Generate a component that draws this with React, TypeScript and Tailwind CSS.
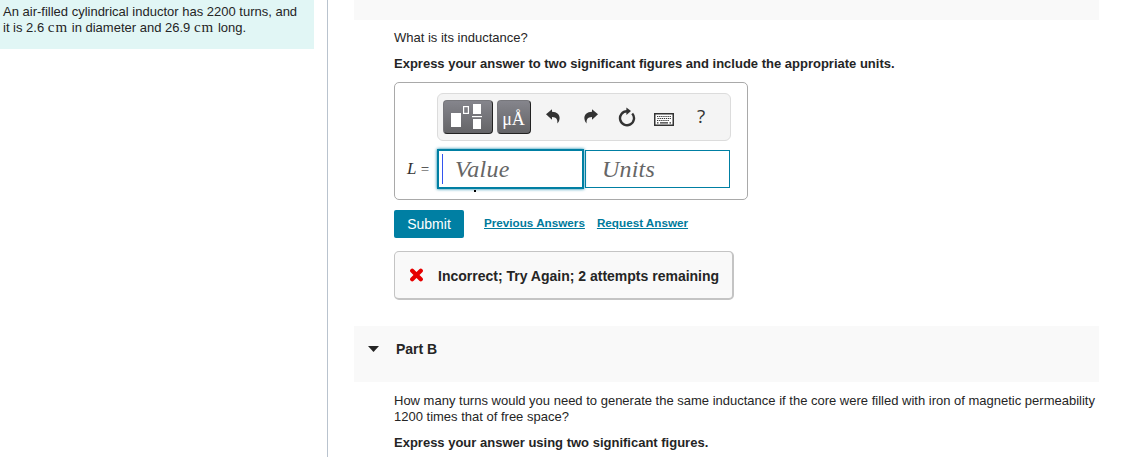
import React from "react";

const UndoIcon = () => (
  <svg width="14" height="15" viewBox="0 0 14 15" fill="#333">
    <path d="M0 5.3 L6 0.3 V2.8 C11 2.8 14 6 13.6 9.5 C13.4 11.8 12.5 13.3 11.3 14.6 C11.8 10.5 10.5 8.2 6 8 V10.8 Z" />
  </svg>
);

const RedoIcon = () => (
  <svg width="14" height="15" viewBox="0 0 14 15" fill="#333">
    <path d="M14 5.3 L8 0.3 V2.8 C3 2.8 0 6 0.4 9.5 C0.6 11.8 1.5 13.3 2.7 14.6 C2.2 10.5 3.5 8.2 8 8 V10.8 Z" />
  </svg>
);

const ResetIcon = () => (
  <svg width="18" height="20" viewBox="0 0 18 20">
    <path
      d="M14.2 6.5 A7 7 0 1 1 9 4.2"
      fill="none"
      stroke="#333"
      strokeWidth="2.4"
    />
    <path d="M8.4 0.5 L13 4.1 L8.4 8 Z" fill="#333" />
  </svg>
);

const KeyboardIcon = () => (
  <svg width="20" height="13" viewBox="0 0 20 13">
    <rect x="0.75" y="0.75" width="18.5" height="11.5" fill="#fff" stroke="#333" strokeWidth="1.5" />
    <path
      d="M3 3.5 H17 M3.5 5.5 H17 M3 7.5 H15"
      stroke="#333"
      strokeWidth="1.1"
      strokeDasharray="1.3 0.8"
    />
    <path d="M3 9.8 H4.5 M6 9.8 H14 M15.5 9.8 H17" stroke="#333" strokeWidth="1.2" />
  </svg>
);

const TemplateIcon = () => (
  <svg className="mr-[2px]" width="32" height="26" viewBox="0 0 32 26" fill="#fff">
    <rect x="0" y="9" width="10" height="14" />
    <rect x="12.6" y="2.6" width="4.8" height="6.8" fill="none" stroke="#fff" strokeWidth="1.2" />
    <rect x="22" y="0" width="8" height="10" />
    <rect x="21" y="12" width="10" height="1.2" />
    <rect x="22" y="15" width="8" height="10" />
  </svg>
);

const Toolbar = () => {
  return (
    <div className="flex h-12 w-[294px] items-start rounded-md border-[1.5px] border-[#dcdcdc] bg-[#f4f4f4] pt-[6px] pl-[5px]">
      <button className="flex h-[34px] w-[50px] items-center justify-center rounded-[4px] border border-r-[#222] border-b-[#222] border-[#77777c] bg-linear-to-b from-[#85858c] to-[#646467]">
        <TemplateIcon />
      </button>
      <button className="ml-1 h-[34px] w-[34px] rounded-[4px] border border-r-[#222] border-b-[#222] border-[#77777c] bg-linear-to-b from-[#85858c] to-[#646467] pt-[3px] pr-px font-['Liberation_Serif',serif] text-[18px] leading-[26px] text-white">
        μÅ
      </button>
      <button className="mt-[9px] ml-[15px]">
        <UndoIcon />
      </button>
      <button className="mt-[9px] ml-6">
        <RedoIcon />
      </button>
      <button className="mt-[7px] ml-[20px]">
        <ResetIcon />
      </button>
      <button className="mt-[13px] ml-[18px]">
        <KeyboardIcon />
      </button>
      <button className="mt-[6px] ml-[23px] font-['Open_Sans',sans-serif] text-[19px] leading-5 text-[#333]">
        ?
      </button>
    </div>
  );
};

const AnswerBox = () => {
  return (
    <div className="mt-[10px] h-[118px] w-[354px] rounded-[5px] border border-[#a9a9a9] pt-[10px]">
      <div className="pl-[42px]">
        <Toolbar />
      </div>
      <div className="mt-2 flex h-10 items-center font-['Liberation_Serif',serif] text-[#333]">
        <div className="w-[42px] pl-[12px] text-[17px] leading-5 whitespace-nowrap">
          <i>L</i> <span className="text-[15px]">=</span>
        </div>
        <div className="relative flex h-10 w-[147px] items-center border-2 border-[#007fa3] pl-[3px] shadow-[0_0_3px_#007fa3]">
          <div className="h-[30px] w-px bg-[#3355ee]"></div>
          <span className="ml-3 text-[24px] tracking-[0.3px] text-[#666] italic">Value</span>
          <div className="absolute top-[39px] left-[35px] h-[2px] w-[2px] bg-black"></div>
        </div>
        <div className="ml-px flex h-[38px] w-[145px] items-center border border-[#007fa3] pl-4 text-[24px] tracking-[0.2px] text-[#666] italic">
          Units
        </div>
      </div>
    </div>
  );
};

const Feedback = () => {
  return (
    <div className="mt-[13px] flex h-[49px] w-[340px] items-center rounded-[5px] border border-r-2 border-b-2 border-[#c4c4c4] bg-[#f9f9f9] pl-[14px]">
      <svg width="15" height="14" viewBox="0 0 15 14">
        <path
          d="M3.2 2.7 L11.8 11.3 M11.8 2.7 L3.2 11.3"
          stroke="#e60000"
          strokeWidth="4.2"
          strokeLinecap="round"
        />
      </svg>
      <span className="mt-[2px] ml-[14px] text-[14px] font-bold whitespace-nowrap text-[#252525]">
        Incorrect; Try Again; 2 attempts remaining
      </span>
    </div>
  );
};

const App = () => {
  return (
    <div className="flex h-[457px] w-[1127px] overflow-hidden bg-white font-['Liberation_Sans',sans-serif] text-[13px] leading-4 text-[#252525]">
      <div className="w-[327px] shrink-0">
        <div className="h-[49px] w-[314px] bg-[#e1f6f5] pt-1 pl-[3px] whitespace-nowrap">
          An air-filled cylindrical inductor has 2200 turns, and
          <br />
          it is 2.6{" "}
          <span className="font-['Liberation_Serif',serif] text-[15px] leading-none tracking-[1px]">cm</span>{" "}
          in diameter and 26.9{" "}
          <span className="font-['Liberation_Serif',serif] text-[15px] leading-none tracking-[1px]">cm</span>{" "}
          long.
        </div>
      </div>
      <div className="w-[800px] border-l border-[#b9c3ce] pl-[26px]">
        <div className="h-5 w-[745px] bg-[#f9f9f9]"></div>
        <div className="pt-[10px] pl-10">
          <p>What is its inductance?</p>
          <p className="mt-[10px] font-bold">
            Express your answer to two significant figures and include the appropriate units.
          </p>
          <AnswerBox />
          <div className="mt-[10px] flex h-7 items-center">
            <button className="h-7 w-[70px] rounded-[2px] bg-[#007fa3] text-[14px] text-white">
              Submit
            </button>
            <a className="-mt-[2px] ml-5 text-[11.7px] font-bold text-[#007a9c] underline">Previous Answers</a>
            <a className="-mt-[2px] ml-3 text-[11.7px] font-bold text-[#007a9c] underline">Request Answer</a>
          </div>
          <Feedback />
        </div>
        <div className="mt-[26px] flex h-14 w-[745px] items-start bg-[#f9f9f9] pt-[15px] pl-[14px]">
          <svg className="mt-[5px]" width="11" height="6" viewBox="0 0 11 6" fill="#252525">
            <path d="M0 0 H11 L5.5 6 Z" />
          </svg>
          <h2 className="ml-[17px] text-[14px] font-bold">Part B</h2>
        </div>
        <div className="pt-[11px] pl-10 whitespace-nowrap">
          <p>
            How many turns would you need to generate the same inductance if the core were filled with iron of magnetic permeability
            <br />
            1200 times that of free space?
          </p>
          <p className="mt-[10px] font-bold">Express your answer using two significant figures.</p>
        </div>
      </div>
    </div>
  );
};

export default App;
